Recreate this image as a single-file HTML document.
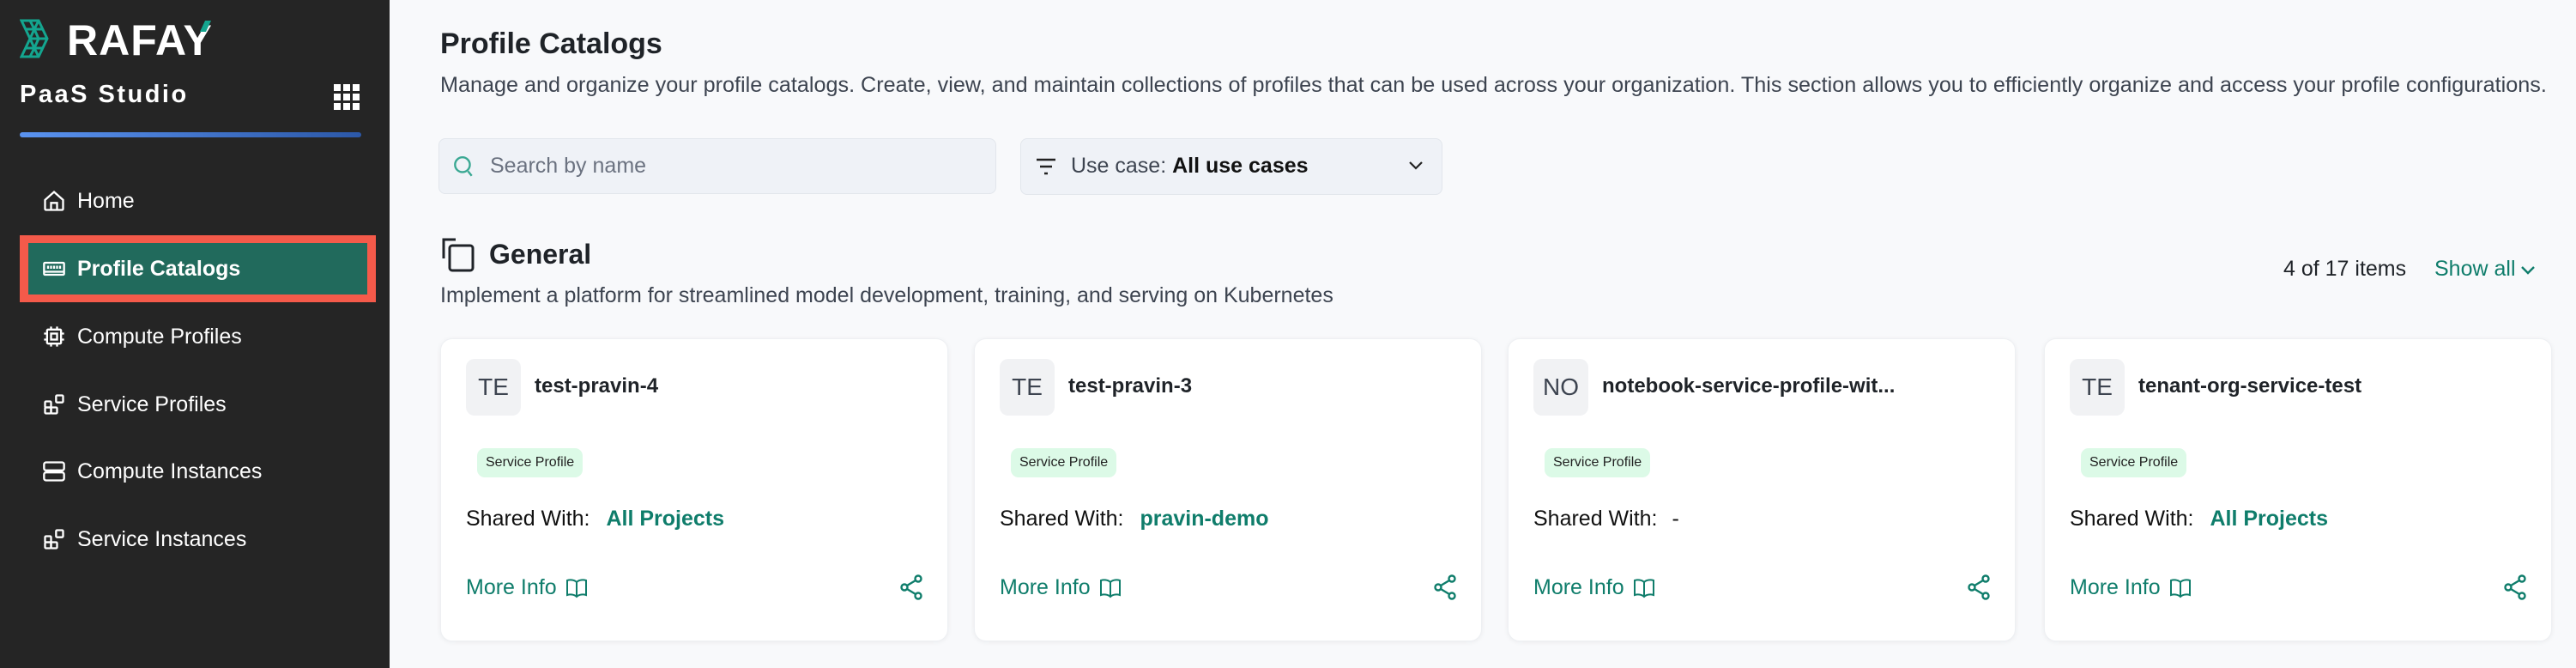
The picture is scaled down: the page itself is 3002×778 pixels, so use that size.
<!DOCTYPE html>
<html><head><meta charset="utf-8"><style>
*{box-sizing:border-box;margin:0;padding:0}
body{width:3002px;height:778px;overflow:hidden;background:#f8f9fb;font-family:"Liberation Sans",sans-serif;position:relative}
.sb{position:absolute;left:0;top:0;width:454px;height:778px;background:#252525}
.abs{position:absolute}
.nav{position:absolute;left:49px;display:flex;align-items:center;color:#fff;font-size:25px;height:40px}
.nav svg{width:28px;height:28px;margin-right:13px}
.card{position:absolute;top:394px;width:592px;height:353px;background:#fff;border-radius:14px;box-shadow:0 1px 6px rgba(0,0,0,.06);border:1px solid #eef0f3}
.av{position:absolute;left:29px;top:23px;width:64px;height:66px;background:#f1f2f4;border-radius:10px;color:#3d4450;font-size:28px;display:flex;align-items:center;justify-content:center}
.nm{position:absolute;left:109px;top:41px;font-size:24px;font-weight:bold;color:#1f2328;white-space:nowrap}
.bd{position:absolute;left:42px;top:127px;height:34px;padding:0 10px;background:#dcfae7;border-radius:9px;font-size:16px;color:#222;line-height:34px}
.sw{position:absolute;left:29px;top:195px;font-size:25px;color:#111}
.sw b{color:#0f7d6b;margin-left:12px}
.mi{position:absolute;left:29px;top:275px;font-size:25px;color:#0f7d6b;display:flex;align-items:center}
.mi svg{margin-left:10px}
.sh{position:absolute;right:28px;top:274px}
</style></head><body>
<div class="sb">
<svg class="abs" style="left:23px;top:22px" width="46" height="46" viewBox="0 0 46 46" fill="none" stroke="#14a58f" stroke-width="3">
<path d="M2 2H22L32 23 22 44H2L12 23Z M12 2L17 12 22 2 M7 12H27 M12 23H32 M7 34H27 M12 44L17 34 22 44 M12 23L17 12 22 23 17 34Z"/></svg>
<div class="abs" style="left:78px;top:18px;color:#fff;font-size:50px;font-weight:bold;letter-spacing:1px">RAFAY</div>
<div class="abs" style="left:236px;top:24px;width:7px;height:13px;background:#14a58f;transform:skewX(-25deg)"></div>
<div class="abs" style="left:23px;top:94px;color:#fff;font-size:29px;font-weight:bold;letter-spacing:2.5px">PaaS Studio</div>
<svg class="abs" style="left:389px;top:98px" width="30" height="30" viewBox="0 0 30 30" fill="#fff"><rect x="0" y="0" width="8" height="8"/><rect x="11" y="0" width="8" height="8"/><rect x="22" y="0" width="8" height="8"/><rect x="0" y="11" width="8" height="8"/><rect x="11" y="11" width="8" height="8"/><rect x="22" y="11" width="8" height="8"/><rect x="0" y="22" width="8" height="8"/><rect x="11" y="22" width="8" height="8"/><rect x="22" y="22" width="8" height="8"/></svg>
<div class="abs" style="left:23px;top:154px;width:398px;height:6px;border-radius:3px;background:linear-gradient(90deg,#5a93f0,#2c58a8)"></div>
<div class="nav" style="top:214px"><svg viewBox="0 0 24 24" fill="none" stroke="#fff" stroke-width="2"><path d="M3 11L12 3l9 8v9a1 1 0 0 1-1 1H4a1 1 0 0 1-1-1z M9 21v-7h6v7"/></svg>Home</div>
<div class="abs" style="left:23px;top:274px;width:415px;height:78px;background:#f45a4a;padding:9px 10px"><div style="width:100%;height:100%;background:#216a5c"></div></div>
<div class="nav" style="top:293px;font-weight:bold"><svg viewBox="0 0 24 24" fill="none" stroke="#fff" stroke-width="2"><rect x="2" y="6" width="20" height="12" rx="1"/><path d="M6 9v3M9 9v3M12 9v3M15 9v3M18 9v3M2 15h20"/></svg>Profile Catalogs</div>
<div class="nav" style="top:372px"><svg viewBox="0 0 24 24" fill="none" stroke="#fff" stroke-width="2"><rect x="5" y="5" width="14" height="14" rx="1"/><rect x="9" y="9" width="6" height="6"/><path d="M9 2v3M15 2v3M9 19v3M15 19v3M2 9h3M2 15h3M19 9h3M19 15h3"/></svg>Compute Profiles</div>
<div class="nav" style="top:451px"><svg viewBox="0 0 24 24" fill="none" stroke="#fff" stroke-width="2"><rect x="3" y="9" width="6" height="6" rx="1"/><rect x="3" y="15" width="6" height="6" rx="1"/><rect x="9" y="15" width="6" height="6" rx="1"/><rect x="14" y="3" width="7" height="7" rx="1"/></svg>Service Profiles</div>
<div class="nav" style="top:529px"><svg viewBox="0 0 24 24" fill="none" stroke="#fff" stroke-width="2"><rect x="2" y="3" width="20" height="8" rx="2"/><rect x="2" y="13" width="20" height="8" rx="2"/><path d="M6 7h.01M6 17h.01"/></svg>Compute Instances</div>
<div class="nav" style="top:608px"><svg viewBox="0 0 24 24" fill="none" stroke="#fff" stroke-width="2"><rect x="3" y="9" width="6" height="6" rx="1"/><rect x="3" y="15" width="6" height="6" rx="1"/><rect x="9" y="15" width="6" height="6" rx="1"/><rect x="14" y="3" width="7" height="7" rx="1"/></svg>Service Instances</div>
</div>

<div class="abs" style="left:513px;top:32px;font-size:34px;font-weight:bold;color:#1f2328">Profile Catalogs</div>
<div class="abs" style="left:513px;top:85px;font-size:25.2px;color:#3d4450;white-space:nowrap">Manage and organize your profile catalogs. Create, view, and maintain collections of profiles that can be used across your organization. This section allows you to efficiently organize and access your profile configurations.</div>

<div class="abs" style="left:511px;top:161px;width:650px;height:65px;background:#eff2f7;border:1px solid #e2e6ec;border-radius:8px"></div>
<svg class="abs" style="left:527px;top:180px" width="26" height="28" viewBox="0 0 24 26" fill="none" stroke="#3aa893" stroke-width="2.2"><circle cx="11" cy="11" r="8"/><path d="M17 18l4 5"/></svg>
<div class="abs" style="left:571px;top:179px;font-size:25px;color:#6b7280">Search by name</div>

<div class="abs" style="left:1189px;top:161px;width:492px;height:66px;background:#eff2f7;border:1px solid #e2e6ec;border-radius:8px"></div>
<svg class="abs" style="left:1207px;top:183px" width="24" height="22" viewBox="0 0 24 22" fill="none" stroke="#222" stroke-width="2.4"><path d="M1 3h22M5 11h14M10 19h4"/></svg>
<div class="abs" style="left:1248px;top:179px;font-size:25px;color:#3d4450">Use case: <b style="color:#111">All use cases</b></div>
<svg class="abs" style="left:1641px;top:187px" width="18" height="12" viewBox="0 0 18 12" fill="none" stroke="#222" stroke-width="2.2"><path d="M2 2l7 7 7-7"/></svg>

<svg class="abs" style="left:514px;top:275px" width="40" height="42" viewBox="0 0 40 42" fill="none" stroke="#1f2328" stroke-width="3"><path d="M3 26V4h14"/><rect x="10" y="11" width="27" height="29" rx="3"/></svg>
<div class="abs" style="left:570px;top:278px;font-size:32px;font-weight:bold;color:#1f2328">General</div>
<div class="abs" style="left:513px;top:330px;font-size:25px;color:#3d4450">Implement a platform for streamlined model development, training, and serving on Kubernetes</div>
<div class="abs" style="left:2661px;top:299px;font-size:25px;color:#1f2328">4 of 17 items</div>
<div class="abs" style="left:2837px;top:299px;font-size:25px;color:#0f7d6b">Show all</div>
<svg class="abs" style="left:2937px;top:309px" width="18" height="12" viewBox="0 0 18 12" fill="none" stroke="#0f7d6b" stroke-width="2.4"><path d="M2 2l7 7 7-7"/></svg>

<div class="card" style="left:513px"><div class="av">TE</div><div class="nm">test-pravin-4</div><div class="bd">Service Profile</div><div class="sw">Shared With: <b>All Projects</b></div><div class="mi">More Info <svg width="26" height="24" viewBox="0 0 26 24" fill="none" stroke="#0f7d6b" stroke-width="2"><path d="M13 5C10 2 5 2 2 3v17c3-1 8-1 11 2 3-3 8-3 11-2V3c-3-1-8-1-11 2zM13 5v17"/></svg></div><svg class="sh" width="28" height="30" viewBox="0 0 28 30" fill="none" stroke="#0f7d6b" stroke-width="2.4"><circle cx="22" cy="5" r="3.5"/><circle cx="6" cy="15" r="3.5"/><circle cx="22" cy="25" r="3.5"/><path d="M9 13l10-6M9 17l10 6"/></svg></div>
<div class="card" style="left:1135px"><div class="av">TE</div><div class="nm">test-pravin-3</div><div class="bd">Service Profile</div><div class="sw">Shared With: <b>pravin-demo</b></div><div class="mi">More Info <svg width="26" height="24" viewBox="0 0 26 24" fill="none" stroke="#0f7d6b" stroke-width="2"><path d="M13 5C10 2 5 2 2 3v17c3-1 8-1 11 2 3-3 8-3 11-2V3c-3-1-8-1-11 2zM13 5v17"/></svg></div><svg class="sh" width="28" height="30" viewBox="0 0 28 30" fill="none" stroke="#0f7d6b" stroke-width="2.4"><circle cx="22" cy="5" r="3.5"/><circle cx="6" cy="15" r="3.5"/><circle cx="22" cy="25" r="3.5"/><path d="M9 13l10-6M9 17l10 6"/></svg></div>
<div class="card" style="left:1757px"><div class="av">NO</div><div class="nm">notebook-service-profile-wit...</div><div class="bd">Service Profile</div><div class="sw">Shared With: <span style="margin-left:10px">-</span></div><div class="mi">More Info <svg width="26" height="24" viewBox="0 0 26 24" fill="none" stroke="#0f7d6b" stroke-width="2"><path d="M13 5C10 2 5 2 2 3v17c3-1 8-1 11 2 3-3 8-3 11-2V3c-3-1-8-1-11 2zM13 5v17"/></svg></div><svg class="sh" width="28" height="30" viewBox="0 0 28 30" fill="none" stroke="#0f7d6b" stroke-width="2.4"><circle cx="22" cy="5" r="3.5"/><circle cx="6" cy="15" r="3.5"/><circle cx="22" cy="25" r="3.5"/><path d="M9 13l10-6M9 17l10 6"/></svg></div>
<div class="card" style="left:2382px"><div class="av">TE</div><div class="nm">tenant-org-service-test</div><div class="bd">Service Profile</div><div class="sw">Shared With: <b>All Projects</b></div><div class="mi">More Info <svg width="26" height="24" viewBox="0 0 26 24" fill="none" stroke="#0f7d6b" stroke-width="2"><path d="M13 5C10 2 5 2 2 3v17c3-1 8-1 11 2 3-3 8-3 11-2V3c-3-1-8-1-11 2zM13 5v17"/></svg></div><svg class="sh" width="28" height="30" viewBox="0 0 28 30" fill="none" stroke="#0f7d6b" stroke-width="2.4"><circle cx="22" cy="5" r="3.5"/><circle cx="6" cy="15" r="3.5"/><circle cx="22" cy="25" r="3.5"/><path d="M9 13l10-6M9 17l10 6"/></svg></div>
</body></html>
